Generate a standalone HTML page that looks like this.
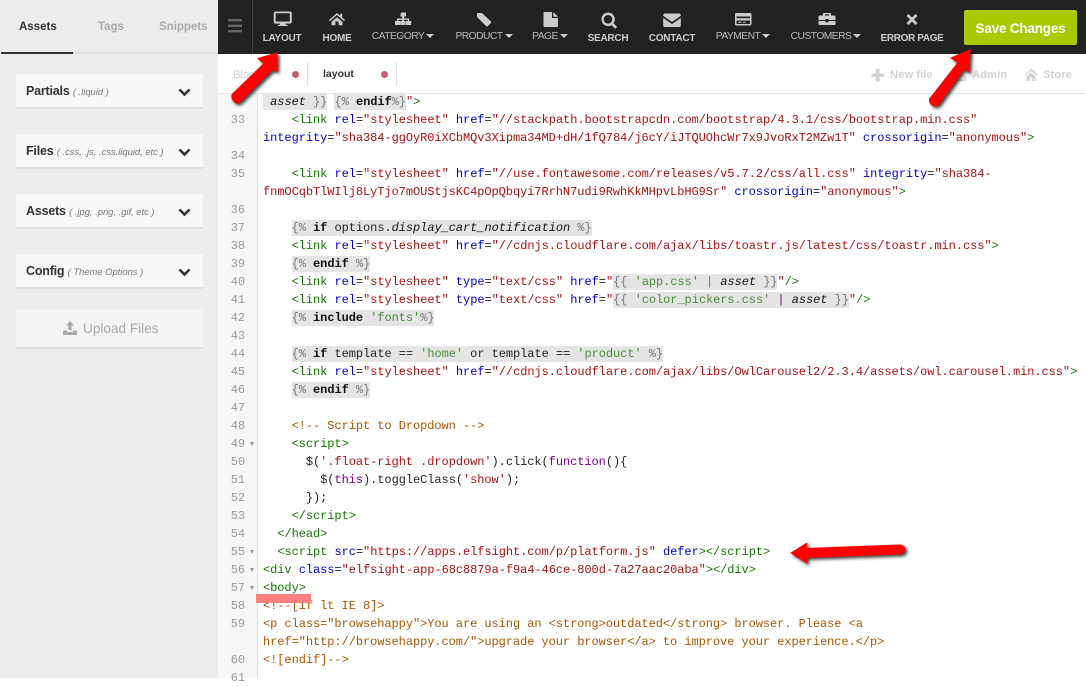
<!DOCTYPE html>
<html><head><meta charset="utf-8"><style>
html,body{margin:0;padding:0}
body{width:1086px;height:678px;overflow:hidden;position:relative;background:#fff;font-family:"Liberation Sans",sans-serif}
div{box-sizing:border-box}
.abs{position:absolute}
#side{left:0;top:0;width:218px;height:678px;background:#ececec}
.tab{position:absolute;top:20px;font-size:11.5px;color:#aaa;font-weight:700;line-height:14px}
.card{position:absolute;left:16px;width:187px;height:35px;background:#f8f8f8;border-bottom:2px solid #dedede;padding:9px 0 0 10px;font-size:12.5px;font-weight:700;color:#333;line-height:16px;letter-spacing:-.2px;white-space:nowrap}
.card i{font-weight:400;font-size:9.4px;color:#777;letter-spacing:0}
.card svg{position:absolute;left:162px;top:14px}
#top{left:218px;top:0;width:868px;height:54px;background:#222}
.lb{position:absolute;top:32px;height:12px;text-align:center;font-size:10px;font-weight:700;color:#ccc;line-height:12px;white-space:nowrap;letter-spacing:-.25px}
.lc{top:31px;font-weight:400;letter-spacing:-.55px;font-size:10.3px;color:#bbb}
.lc:after{content:"";display:inline-block;border-left:4px solid transparent;border-right:4px solid transparent;border-top:4px solid #ccc;margin-left:2px;vertical-align:1px}
#save{left:964px;top:10px;width:113px;height:35px;background:#a9ca00;border-radius:2px;color:#fff;font-weight:700;font-size:13.5px;line-height:37px;text-align:center;letter-spacing:-.2px}
#tabs{left:218px;top:54px;width:868px;height:40px;background:#fff;border-bottom:1px solid #e2e2e2}
.r{position:absolute;top:14px;font-size:11.3px;font-weight:700;color:#d2d2d2;line-height:14px}
.dot{position:absolute;width:7px;height:7px;border-radius:50%;background:#c1616b;top:17px}
.sp{position:absolute;width:1px;top:8px;height:24px;background:#e2e2e2}
#gut{left:218px;top:94px;width:40px;height:584px;background:#f7f7f7;border-right:1px solid #ddd}
.n{position:absolute;right:12px;font:12px/18px "Liberation Mono",monospace;color:#999;letter-spacing:-.06px}
.f{position:absolute;left:32px;width:0;height:0;border-left:2.5px solid transparent;border-right:2.5px solid transparent;border-top:4px solid #999}
#code{left:263px;top:93px;width:823px;height:585px;overflow:hidden;font:12px/18px "Liberation Mono",monospace;letter-spacing:-.06px;color:#222}
#code div{height:18px;white-space:pre}
.t{color:#170}.a{color:#00c}.s{color:#a11}.c{color:#a50}
.l{background:#e4e4e4;padding:1px 0}
.d{color:#777}.k{font-weight:700;color:#111}.e{font-style:italic;color:#111}.g{color:#4c8a3c}.p{color:#708}
</style></head><body>

<div class="abs" id="side">
  <div class="abs" style="left:0;top:52px;width:218px;height:2px;background:#dcdcdc"></div>
  <div class="abs" style="left:1px;top:52px;width:72px;height:2px;background:#333"></div>
  <div class="tab" style="left:19px;color:#333">Assets</div>
  <div class="tab" style="left:98px">Tags</div>
  <div class="tab" style="left:159px">Snippets</div>
  <div class="card" style="top:74px">Partials <i>( .liquid )</i><svg width="13" height="9" viewBox="0 0 13 9"><path d="M1.500 1.500L6.500 6.500L11.500 1.500" fill="none" stroke="#333" stroke-width="2.6"/></svg></div>
  <div class="card" style="top:134px">Files <i>( .css, .js, .css.liquid, etc )</i><svg width="13" height="9" viewBox="0 0 13 9"><path d="M1.500 1.500L6.500 6.500L11.500 1.500" fill="none" stroke="#333" stroke-width="2.6"/></svg></div>
  <div class="card" style="top:194px">Assets <i>( .jpg, .png, .gif, etc )</i><svg width="13" height="9" viewBox="0 0 13 9"><path d="M1.500 1.500L6.500 6.500L11.500 1.500" fill="none" stroke="#333" stroke-width="2.6"/></svg></div>
  <div class="card" style="top:254px">Config <i>( Theme Options )</i><svg width="13" height="9" viewBox="0 0 13 9"><path d="M1.500 1.500L6.500 6.500L11.500 1.500" fill="none" stroke="#333" stroke-width="2.6"/></svg></div>
  <div class="abs" style="left:16px;top:309px;width:187px;height:40px;background:#f3f3f3;border-bottom:2px solid #dedede;color:#aaa;font-size:13.6px;line-height:39px;padding-left:67px">Upload Files</div>
  <svg class="abs" style="left:63px;top:321px" width="14" height="14" viewBox="0 0 14 14"><path d="M7 0L11 4.500H8.700V9H5.300V4.500H3ZM0 9.500H4V11H10V9.500H14V14H0Z" fill="#aaa"/></svg>
</div>

<div class="abs" id="top"></div>
<svg class="abs" style="left:218px;top:0" width="868" height="54" viewBox="218 0 868 54">
  <path d="M228 19h14v2.400h-14zM228 24.600h14V27h-14zM228 30h14v2.400h-14z" fill="#666"/>
  <rect x="252" y="0" width="1" height="54" fill="#444"/>
  <g fill="#ccc">
    <path fill-rule="evenodd" d="M275.500 11.500h14.500a1.800 1.800 0 0 1 1.800 1.800v8.500a1.800 1.800 0 0 1-1.800 1.800h-4.500v1.200h2v1.200h-9.500v-1.200h2v-1.200h-4.500a1.800 1.800 0 0 1-1.800-1.800v-8.500a1.800 1.800 0 0 1 1.800-1.800zM275.700 13.300v8.200h14.100v-8.200z"/>
    <path d="M337 13l3.200 2.800v-2h2v3.800l2.800 2.400-1 1.100-7-6.100-7 6.100-1-1.100zM337 17.200l5.500 4.700v3.300h-3.900v-3.700h-3.200v3.700h-3.900v-3.300z"/>
    <path d="M401 12.500h5v4h-1.800v2h5v2.500h2v4h-5.200v-4h1.800v-1.100h-3.800v1.100h1.600v4h-5.200v-4h1.800v-1.100h-3.800v1.100h1.800v4h-5.200v-4h2v-2.500h5v-2h-1.800z"/>
    <path d="M477 13h5l8.700 8.200a1.500 1.500 0 0 1 0 2l-2.700 2.800a1.500 1.500 0 0 1-2 0l-8.500-8.500a3 3 0 0 1-.5-1.800z"/>
    <path d="M544.500 12h7.500v6h6v8a1 1 0 0 1-1 1h-12.500a1 1 0 0 1-1-1v-13a1 1 0 0 1 1-1zM553.300 12l4.700 4.700h-4.700z"/>
    <path fill-rule="evenodd" d="M608 13a6.800 6.800 0 0 1 5.500 10.800l3.600 3.600-1.900 1.900-3.600-3.600A6.800 6.800 0 1 1 608 13zM608 15.500a4.300 4.300 0 1 0 0 8.600 4.300 4.300 0 0 0 0-8.600z" transform="translate(0 -.5)"/>
    <path d="M665 13.500h14a1.800 1.800 0 0 1 1.800 1.800v.6l-8.800 6-8.800-6v-.6a1.800 1.800 0 0 1 1.800-1.800zM663.200 18l8.800 6 8.800-6v7.200a1.800 1.800 0 0 1-1.800 1.800h-14a1.800 1.800 0 0 1-1.800-1.800z"/>
    <path fill-rule="evenodd" d="M736.500 13h13.500a1.500 1.500 0 0 1 1.500 1.500v9.500a1.500 1.500 0 0 1-1.500 1.500H736.500a1.500 1.500 0 0 1-1.500-1.500v-9.500a1.500 1.500 0 0 1 1.500-1.500zM736.500 16.500v1.800h13.500v-1.800zM736.500 20.500v3.500h13.500v-3.500zM738 21.800h3.500v1h-3.500zM743 21.800h2.500v1h-2.500z"/>
    <path d="M824 13h6a1 1 0 0 1 1 1v1.500h3a1.500 1.500 0 0 1 1.500 1.500v3h-7v-1h-3v1h-7v-3a1.500 1.500 0 0 1 1.500-1.500h3V14a1 1 0 0 1 1-1zM825 14.300v1.200h4v-1.200zM818.500 21h7v1.300h3V21h7v3a1 1 0 0 1-1 1h-15a1 1 0 0 1-1-1z"/>
    <path d="M906.500 15l2-2 3.500 3.500 3.500-3.500 2 2-3.500 3.500 3.500 3.500-2 2-3.500-3.500-3.500 3.500-2-2 3.500-3.500z" transform="translate(0 1)"/>
  </g>
</svg>
<div class="lb" style="left:252px;width:60px;top:33px">LAYOUT</div>
<div class="lb" style="left:312px;width:50px;top:33px">HOME</div>
<div class="lb lc" style="left:363px;width:80px">CATEGORY</div>
<div class="lb lc" style="left:444px;width:80px">PRODUCT</div>
<div class="lb lc" style="left:520px;width:60px">PAGE</div>
<div class="lb" style="left:583px;width:50px;top:33px">SEARCH</div>
<div class="lb" style="left:642px;width:60px;top:33px">CONTACT</div>
<div class="lb lc" style="left:703px;width:80px">PAYMENT</div>
<div class="lb lc" style="left:781px;width:90px">CUSTOMERS</div>
<div class="lb" style="left:872px;width:80px;top:33px;letter-spacing:-.35px">ERROR PAGE</div>
<div class="abs" id="save">Save Changes</div>

<div class="abs" id="tabs">
  <div class="r" style="left:15px;color:#ccc;font-weight:400">Blog</div>
  <div class="dot" style="left:74px"></div>
  <div class="sp" style="left:89px"></div>
  <div class="r" style="left:105px;top:13px;color:#333;font-size:10.5px">layout</div>
  <div class="dot" style="left:163px"></div>
  <div class="sp" style="left:178px"></div>
  <div class="r" style="left:672px">New file</div>
  <div class="r" style="left:754px">Admin</div>
  <div class="r" style="left:825px">Store</div>
  <svg class="abs" style="left:653px;top:14px" width="14" height="14" viewBox="0 0 14 14"><path d="M5 1h3.500v4.500H13V9H8.500v4.500H5V9H.5V5.500H5z" fill="#d2d2d2"/></svg>
  <svg class="abs" style="left:736px;top:14px" width="14" height="14" viewBox="0 0 14 14"><path d="M2 3h5v1.500H3.500v7h7V8H12v5H2z" fill="#d2d2d2"/></svg>
  <svg class="abs" style="left:806px;top:14px" width="14" height="14" viewBox="0 0 14 14"><path d="M7 1l2.500 2.200V2H11v2.500L13.500 7l-.8.900L7 3 1.300 7.900.5 7zM7 4.600l4.500 3.800V13H8.300V9.800H5.700V13H2.500V8.400z" fill="#d2d2d2"/></svg>
</div>

<div class="abs" id="gut">
  <div class="n" style="top:17px">33</div><div class="n" style="top:53px">34</div><div class="n" style="top:71px">35</div>
  <div class="n" style="top:107px">36</div><div class="n" style="top:125px">37</div><div class="n" style="top:143px">38</div><div class="n" style="top:161px">39</div><div class="n" style="top:179px">40</div><div class="n" style="top:197px">41</div><div class="n" style="top:215px">42</div><div class="n" style="top:233px">43</div><div class="n" style="top:251px">44</div><div class="n" style="top:269px">45</div><div class="n" style="top:287px">46</div><div class="n" style="top:305px">47</div><div class="n" style="top:323px">48</div><div class="n" style="top:341px">49</div><div class="n" style="top:359px">50</div><div class="n" style="top:377px">51</div><div class="n" style="top:395px">52</div><div class="n" style="top:413px">53</div><div class="n" style="top:431px">54</div><div class="n" style="top:449px">55</div><div class="n" style="top:467px">56</div><div class="n" style="top:485px">57</div><div class="n" style="top:503px">58</div><div class="n" style="top:521px">59</div><div class="n" style="top:557px">60</div><div class="n" style="top:575px">61</div>
  <div class="f" style="top:348px"></div><div class="f" style="top:456px"></div><div class="f" style="top:474px"></div><div class="f" style="top:492px"></div>
</div>

<div class="abs" id="code">
<div><span class="l"> <span class="e">asset</span> <span class="d">}}</span></span> <span class="l"><span class="d">{%</span> <span class="k">endif</span><span class="d">%}</span></span><span class="s">"</span><span class="t">&gt;</span></div>
<div>    <span class="t">&lt;link</span> <span class="a">rel</span>=<span class="s">"stylesheet"</span> <span class="a">href</span>=<span class="s">"//stackpath.bootstrapcdn.com/bootstrap/4.3.1/css/bootstrap.min.css"</span></div>
<div><span class="a">integrity</span>=<span class="s">"sha384-ggOyR0iXCbMQv3Xipma34MD+dH/1fQ784/j6cY/iJTQUOhcWr7x9JvoRxT2MZw1T"</span> <span class="a">crossorigin</span>=<span class="s">"anonymous"</span><span class="t">&gt;</span></div>
<div></div>
<div>    <span class="t">&lt;link</span> <span class="a">rel</span>=<span class="s">"stylesheet"</span> <span class="a">href</span>=<span class="s">"//use.fontawesome.com/releases/v5.7.2/css/all.css"</span> <span class="a">integrity</span>=<span class="s">"sha384-</span></div>
<div><span class="s">fnmOCqbTlWIlj8LyTjo7mOUStjsKC4pOpQbqyi7RrhN7udi9RwhKkMHpvLbHG9Sr"</span> <span class="a">crossorigin</span>=<span class="s">"anonymous"</span><span class="t">&gt;</span></div>
<div></div>
<div>    <span class="l"><span class="d">{%</span> <span class="k">if</span> options.<span class="e">display_cart_notification</span> <span class="d">%}</span></span></div>
<div>    <span class="t">&lt;link</span> <span class="a">rel</span>=<span class="s">"stylesheet"</span> <span class="a">href</span>=<span class="s">"//cdnjs.cloudflare.com/ajax/libs/toastr.js/latest/css/toastr.min.css"</span><span class="t">&gt;</span></div>
<div>    <span class="l"><span class="d">{%</span> <span class="k">endif</span> <span class="d">%}</span></span></div>
<div>    <span class="t">&lt;link</span> <span class="a">rel</span>=<span class="s">"stylesheet"</span> <span class="a">type</span>=<span class="s">"text/css"</span> <span class="a">href</span>=<span class="s">"</span><span class="l"><span class="d">{{</span> <span class="g">'app.css'</span> <span style="color:#b60">|</span> <span class="e">asset</span> <span class="d">}}</span></span><span class="s">"</span><span class="t">/&gt;</span></div>
<div>    <span class="t">&lt;link</span> <span class="a">rel</span>=<span class="s">"stylesheet"</span> <span class="a">type</span>=<span class="s">"text/css"</span> <span class="a">href</span>=<span class="s">"</span><span class="l"><span class="d">{{</span> <span class="g">'color_pickers.css'</span> <span class="p">|</span> <span class="e">asset</span> <span class="d">}}</span></span><span class="s">"</span><span class="t">/&gt;</span></div>
<div>    <span class="l"><span class="d">{%</span> <span class="k">include</span> <span class="g">'fonts'</span><span class="d">%}</span></span></div>
<div></div>
<div>    <span class="l"><span class="d">{%</span> <span class="k">if</span> template == <span class="g">'home'</span> or template == <span class="g">'product'</span> <span class="d">%}</span></span></div>
<div>    <span class="t">&lt;link</span> <span class="a">rel</span>=<span class="s">"stylesheet"</span> <span class="a">href</span>=<span class="s">"//cdnjs.cloudflare.com/ajax/libs/OwlCarousel2/2.3.4/assets/owl.carousel.min.css"</span><span class="t">&gt;</span></div>
<div>    <span class="l"><span class="d">{%</span> <span class="k">endif</span> <span class="d">%}</span></span></div>
<div></div>
<div>    <span class="c">&lt;!-- Script to Dropdown --&gt;</span></div>
<div>    <span class="t">&lt;script&gt;</span></div>
<div>      $(<span class="s">'.float-right .dropdown'</span>).click(<span class="p">function</span>(){</div>
<div>        $(<span class="p">this</span>).toggleClass(<span class="s">'show'</span>);</div>
<div>      });</div>
<div>    <span class="t">&lt;/script&gt;</span></div>
<div>  <span class="t">&lt;/head&gt;</span></div>
<div>  <span class="t">&lt;script</span> <span class="a">src</span>=<span class="s">"https://apps.elfsight.com/p/platform.js"</span> <span class="a">defer</span><span class="t">&gt;&lt;/script&gt;</span></div>
<div><span class="t">&lt;div</span> <span class="a">class</span>=<span class="s">"elfsight-app-68c8879a-f9a4-46ce-800d-7a27aac20aba"</span><span class="t">&gt;&lt;/div&gt;</span></div>
<div><span class="t">&lt;body&gt;</span></div>
<div><span class="c">&lt;!--[if lt IE 8]&gt;</span></div>
<div><span class="c">&lt;p class="browsehappy"&gt;You are using an &lt;strong&gt;outdated&lt;/strong&gt; browser. Please &lt;a</span></div>
<div><span class="c">href="http://browsehappy.com/"&gt;upgrade your browser&lt;/a&gt; to improve your experience.&lt;/p&gt;</span></div>
<div><span class="c">&lt;![endif]--&gt;</span></div>
</div>

<div class="abs" style="left:256px;top:594px;width:55px;height:9px;background:#ff8080"></div>

<svg class="abs" style="left:0;top:0;filter:drop-shadow(2px 2px 1.500px rgba(0,0,0,.75))" width="1086" height="678">
  <g fill="#f00" stroke="#f00" stroke-linejoin="round">
    <path d="M277 53L258 58.500L264 63.500L232 94.500Q231 100 236 103Q239 103 241 101L272 70L277 71Z" stroke-width="1"/>
    <path d="M970 50L951 58L958 62.500L929.500 99Q929 104 934 106Q937 106 939 104L964 69L969 72Z" stroke-width="1"/>
    <path d="M791 553L807 543L806 548.500L900 545Q905 546 905 549.500Q905 553 900 554L806 557.500L807 563Z" stroke-width="1"/>
  </g>
</svg>
</body></html>
